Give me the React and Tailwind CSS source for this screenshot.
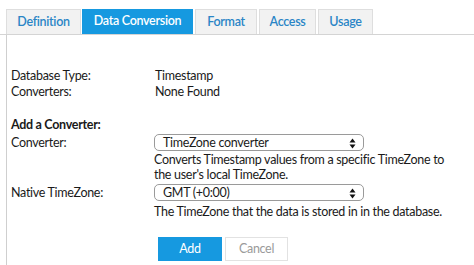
import React from "react";

function Arrows() {
  return (
    <svg width="7" height="11" viewBox="0 0 7 11" className="absolute right-[7px] top-[3px]">
      <path d="M3.5 0.5 L6.5 4.5 L0.5 4.5 Z" fill="#111" />
      <path d="M3.5 10.5 L6.5 6.5 L0.5 6.5 Z" fill="#111" />
    </svg>
  );
}

function Select({ value }) {
  return (
    <div className="relative w-[210px] h-[17px] rounded-[5px] border border-[#9a9a9a] bg-white pl-[8px] text-[12.5px] leading-[15px] text-[#1a1a1a]">
      {value}
      <Arrows />
    </div>
  );
}

export default function App() {
  const tabs = [
    { label: "Definition", w: "w-[75px]" },
    { label: "Data Conversion", w: "w-[111px]", active: true },
    { label: "Format", w: "w-[62px]" },
    { label: "Access", w: "w-[57px]" },
    { label: "Usage", w: "w-[55px]" },
  ];
  return (
    <div
      className="w-[474px] h-[265px] bg-white overflow-hidden text-[#1a1a1a] tracking-[-0.3px]"
      style={{ fontFamily: "Lato, 'Noto Sans', sans-serif" }}
    >
      <div className="flex pt-[9px] pl-[6px] border-b border-[#d4d4d4] gap-[2px]">
        {tabs.map((t) => (
          <div
            key={t.label}
            className={
              t.active
                ? `${t.w} h-[25px] -ml-[1px] bg-[#1699e0] text-white text-[12.5px] font-semibold flex items-center justify-center`
                : `${t.w} h-[25px] bg-[#f2f2f2] border border-b-0 border-[#dedede] text-[#2a85c6] text-[12.5px] font-semibold flex items-center justify-center`
            }
          >
            {t.label}
          </div>
        ))}
      </div>
      <div className="ml-[6px] border-l border-[#cfcfcf] h-[231px] pl-[4px] pt-[33px] text-[12.5px]">
        <div className="grid grid-cols-[144px_1fr] leading-[16px]">
          <div>Database Type:</div>
          <div>Timestamp</div>
          <div>Converters:</div>
          <div>None Found</div>
        </div>
        <div className="mt-[17px] font-bold leading-[16px]">Add a Converter:</div>
        <div className="grid grid-cols-[143px_1fr] mt-[1px]">
          <div className="leading-[17px]">Converter:</div>
          <div>
            <Select value="TimeZone converter" />
            <div className="leading-[15px] mt-[1px]">
              Converts Timestamp values from a specific TimeZone to
              <br />
              the user's local TimeZone.
            </div>
          </div>
        </div>
        <div className="grid grid-cols-[143px_1fr] mt-[2px]">
          <div className="leading-[17px]">Native TimeZone:</div>
          <div>
            <Select value="GMT (+0:00)" />
            <div className="leading-[15px] mt-[3px]">
              The TimeZone that the data is stored in in the database.
            </div>
          </div>
        </div>
        <div className="flex gap-[3px] ml-[147px] mt-[18px]">
          <div className="w-[64px] h-[24px] bg-[#1699e0] text-white flex items-center justify-center">
            Add
          </div>
          <div className="w-[63px] h-[24px] bg-white border border-[#e2e2e2] text-[#9a9a9a] flex items-center justify-center">
            Cancel
          </div>
        </div>
      </div>
    </div>
  );
}
